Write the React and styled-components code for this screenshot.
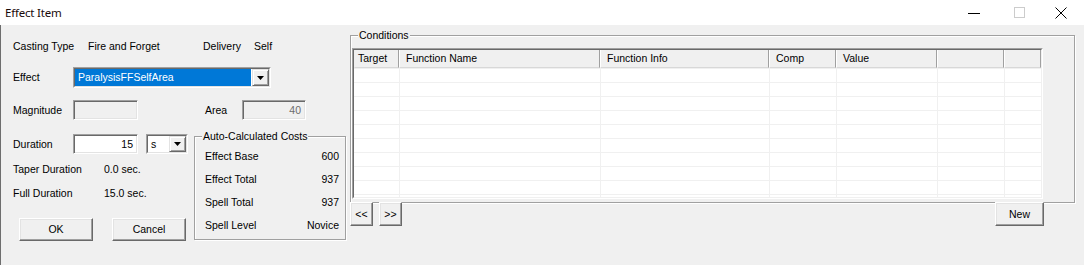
import React from "react";
import styled, { createGlobalStyle } from "styled-components";

const Global = createGlobalStyle`
  html, body, #root { margin: 0; padding: 0; height: 100%; overflow: hidden; }
  body {
    background: #f0f0f0;
    font-family: "Liberation Sans", Arial, sans-serif;
    font-size: 10.5px;
    color: #000;
  }
  * { box-sizing: border-box; }
`;

const Win = styled.div`
  width: 1084px;
  height: 265px;
  display: flex;
  flex-direction: column;
  background: #f0f0f0;
`;

const TitleBar = styled.div`
  height: 25px;
  flex-shrink: 0;
  background: #fff;
  display: flex;
  align-items: center;
`;

const Title = styled.div`
  padding-left: 5px;
  font-family: "Noto Sans", "Open Sans", sans-serif;
  font-size: 11.5px;
  letter-spacing: -0.2px;
  color: #1a0a0a;
  flex: 1;
`;

const CtrlBtn = styled.div`
  width: ${(p) => p.$w}px;
  height: 25px;
  display: flex;
  align-items: center;
  justify-content: center;
`;

const Body = styled.div`
  flex: 1;
  display: flex;
  border-left: 1px solid #6e6e6e;
  min-height: 0;
`;

const LeftPanel = styled.div`
  width: 349px;
  flex-shrink: 0;
  padding-left: 12px;
  display: flex;
  flex-direction: column;
`;

const Row = styled.div`
  display: flex;
  align-items: center;
  height: ${(p) => p.$h}px;
  margin-top: ${(p) => p.$mt || 0}px;
`;

const Label = styled.span`
  width: ${(p) => (p.$w ? `${p.$w}px` : "auto")};
  margin-left: ${(p) => p.$ml || 0}px;
  flex-shrink: 0;
  white-space: nowrap;
  line-height: 13px;
`;

const TextBox = styled.div`
  width: ${(p) => p.$w}px;
  height: ${(p) => p.$h || 20}px;
  margin-left: ${(p) => p.$ml || 0}px;
  flex-shrink: 0;
  border: 1px solid;
  border-color: #a0a0a0 #fff #fff #a0a0a0;
  box-shadow: inset 1px 1px 0 #696969, inset -1px -1px 0 #e3e3e3;
  background: ${(p) => (p.$disabled ? "#f0f0f0" : "#fff")};
  color: ${(p) => (p.$disabled ? "#6d6d6d" : "#000")};
  display: flex;
  align-items: center;
  justify-content: flex-end;
  padding-right: 4px;
  line-height: 13px;
`;

const Combo = styled.div`
  width: ${(p) => p.$w}px;
  height: ${(p) => p.$h}px;
  margin-left: ${(p) => p.$ml || 0}px;
  flex-shrink: 0;
  border: 1px solid;
  border-color: #a0a0a0 #fff #fff #a0a0a0;
  background: #fff;
  display: flex;
`;

const ComboInner = styled.div`
  flex: 1;
  display: flex;
  border: 1px solid;
  border-color: #696969 #e3e3e3 #e3e3e3 #696969;
  background: #fff;
`;

const ComboText = styled.div`
  flex: 1;
  margin-right: 1px;
  background: ${(p) => (p.$selected ? "#0078d7" : "#fff")};
  color: ${(p) => (p.$selected ? "#fff" : "#000")};
  display: flex;
  align-items: center;
  padding-left: 3px;
  line-height: 13px;
  white-space: nowrap;
  overflow: hidden;
`;

const DropBtn = styled.div`
  width: 17px;
  flex-shrink: 0;
  background: #f0f0f0;
  border: 1px solid;
  border-color: #e3e3e3 #696969 #696969 #e3e3e3;
  box-shadow: inset 1px 1px 0 #fff, inset -1px -1px 0 #a0a0a0;
  display: flex;
  align-items: center;
  justify-content: center;
`;

const Lower = styled.div`
  display: flex;
`;

const LeftCol = styled.div`
  width: 181px;
  flex-shrink: 0;
  display: flex;
  flex-direction: column;
`;

const Button = styled.div`
  width: ${(p) => p.$w}px;
  height: ${(p) => p.$h || 23}px;
  margin-left: ${(p) => p.$ml || 0}px;
  flex-shrink: 0;
  background: #f0f0f0;
  border: 1px solid;
  border-color: #fff #696969 #696969 #fff;
  box-shadow: inset -1px -1px 0 #a0a0a0, inset 1px 1px 0 #e3e3e3;
  display: flex;
  align-items: center;
  justify-content: center;
  line-height: 13px;
  white-space: nowrap;
`;

const GroupBox = styled.fieldset`
  margin: ${(p) => p.$mt || 0}px 0 0 0;
  width: ${(p) => p.$w}px;
  height: ${(p) => p.$h}px;
  min-width: 0;
  flex-shrink: 0;
  padding: ${(p) => p.$pad};
  border: 1px solid #a0a0a0;
  box-shadow: inset 1px 1px 0 #fff, 1px 1px 0 #fff;
  display: flex;
  flex-direction: column;
`;

const Legend = styled.legend`
  padding: 0 1px;
  margin-left: ${(p) => p.$ml}px;
  line-height: 13px;
  background: #f0f0f0;
  white-space: nowrap;
`;

const CostRow = styled.div`
  height: 23px;
  padding-left: 3px;
  display: flex;
  align-items: center;
  justify-content: space-between;
  line-height: 13px;
`;

const RightPanel = styled.div`
  display: flex;
  flex-direction: column;
  padding-top: 4px;
`;

const ListOuter = styled.div`
  margin-top: 6px;
  width: 691px;
  height: 151px;
  border: 1px solid;
  border-color: #a0a0a0 #fff #fff #a0a0a0;
  display: flex;
`;

const ListInner = styled.div`
  flex: 1;
  border: 1px solid;
  border-color: #696969 #f0f0f0 #f0f0f0 #696969;
  background: #fff;
  overflow: hidden;
  display: flex;
  flex-direction: column;
`;

const HeaderRow = styled.div`
  display: flex;
  height: 18px;
  flex-shrink: 0;
  background: #f0f0f0;
`;

const HeaderCell = styled.div`
  width: ${(p) => p.$w}px;
  flex-shrink: 0;
  border-left: 1px solid ${(p) => (p.$first ? "#f0f0f0" : "#fff")};
  border-right: 1px solid #a0a0a0;
  border-bottom: 1px solid #d8d8d8;
  padding-left: ${(p) => (p.$first ? 3 : 6)}px;
  display: flex;
  align-items: center;
  line-height: 13px;
  white-space: nowrap;
`;

const GridRow = styled.div`
  display: flex;
  height: 14px;
  flex-shrink: 0;
  border-top: 1px solid #f0f0f0;
`;

const GridCell = styled.div`
  width: ${(p) => p.$w}px;
  flex-shrink: 0;
  border-left: 1px solid ${(p) => (p.$first ? "transparent" : "#f0f0f0")};
`;

const Footer = styled.div`
  display: flex;
  width: 694px;
  margin-top: -1px;
`;

const Spacer = styled.div`
  flex: 1;
`;

const Arrow = () => (
  <svg width="7" height="4" viewBox="0 0 7 4">
    <polygon points="0,0 7,0 3.5,4" fill="#000" />
  </svg>
);

const columns = [
  { name: "Target", w: 45 },
  { name: "Function Name", w: 201 },
  { name: "Function Info", w: 169 },
  { name: "Comp", w: 67 },
  { name: "Value", w: 101 },
  { name: "", w: 67 },
  { name: "", w: 37 },
];

const costs = [
  ["Effect Base", "600"],
  ["Effect Total", "937"],
  ["Spell Total", "937"],
  ["Spell Level", "Novice"],
];

export default function App() {
  return (
    <>
      <Global />
      <Win>
        <TitleBar>
          <Title>Effect Item</Title>
          <CtrlBtn $w={52}>
            <svg width="12" height="10" viewBox="0 0 12 10">
              <line x1="0" y1="5.5" x2="12" y2="5.5" stroke="#000" strokeWidth="1" />
            </svg>
          </CtrlBtn>
          <CtrlBtn $w={38}>
            <svg width="11" height="11" viewBox="0 0 11 11">
              <rect x="0.5" y="0.5" width="10" height="10" fill="none" stroke="#cccccc" strokeWidth="1" />
            </svg>
          </CtrlBtn>
          <CtrlBtn $w={46}>
            <svg width="12" height="12" viewBox="0 0 12 12">
              <path d="M0.5 0.5 L11.5 11.5 M11.5 0.5 L0.5 11.5" stroke="#000" strokeWidth="1" />
            </svg>
          </CtrlBtn>
        </TitleBar>
        <Body>
          <LeftPanel>
            <Row $h={20} $mt={11}>
              <Label $w={75}>Casting Type</Label>
              <Label $w={115}>Fire and Forget</Label>
              <Label $w={51}>Delivery</Label>
              <Label>Self</Label>
            </Row>
            <Row $h={21} $mt={11}>
              <Label $w={60}>Effect</Label>
              <Combo $w={198} $h={21}>
                <ComboInner>
                  <ComboText $selected>ParalysisFFSelfArea</ComboText>
                  <DropBtn>
                    <Arrow />
                  </DropBtn>
                </ComboInner>
              </Combo>
            </Row>
            <Row $h={20} $mt={12}>
              <Label $w={60}>Magnitude</Label>
              <TextBox $w={65} $disabled />
              <Label $w={37} $ml={67}>Area</Label>
              <TextBox $w={64} $disabled>40</TextBox>
            </Row>
            <Lower>
              <LeftCol>
                <Row $h={20} $mt={14}>
                  <Label $w={60}>Duration</Label>
                  <TextBox $w={65}>15</TextBox>
                  <Combo $w={42} $h={20} $ml={8}>
                    <ComboInner>
                      <ComboText>s</ComboText>
                      <DropBtn>
                        <Arrow />
                      </DropBtn>
                    </ComboInner>
                  </Combo>
                </Row>
                <Row $h={24} $mt={3}>
                  <Label $w={91}>Taper Duration</Label>
                  <Label>0.0 sec.</Label>
                </Row>
                <Row $h={24}>
                  <Label $w={91}>Full Duration</Label>
                  <Label>15.0 sec.</Label>
                </Row>
                <Row $h={23} $mt={13}>
                  <Button $w={74} $ml={6}>OK</Button>
                  <Button $w={74} $ml={19}>Cancel</Button>
                </Row>
              </LeftCol>
              <GroupBox $mt={10} $w={152} $h={110} $pad="2px 6px 0 7px">
                <Legend $ml={0}>Auto-Calculated Costs</Legend>
                {costs.map(([k, v]) => (
                  <CostRow key={k}>
                    <span>{k}</span>
                    <span>{v}</span>
                  </CostRow>
                ))}
              </GroupBox>
            </Lower>
          </LeftPanel>
          <RightPanel>
            <GroupBox $w={725} $h={174} $pad="0 0 0 1px">
              <Legend $ml={6}>Conditions</Legend>
              <ListOuter>
                <ListInner>
                  <HeaderRow>
                    {columns.map((c, i) => (
                      <HeaderCell key={i} $w={c.w} $first={i === 0}>
                        {c.name}
                      </HeaderCell>
                    ))}
                  </HeaderRow>
                  {Array.from({ length: 10 }).map((_, r) => (
                    <GridRow key={r}>
                      {columns.map((c, i) => (
                        <GridCell key={i} $w={c.w} $first={i === 0} />
                      ))}
                    </GridRow>
                  ))}
                </ListInner>
              </ListOuter>
            </GroupBox>
            <Footer>
              <Button $w={23} $h={24}>&lt;&lt;</Button>
              <Button $w={23} $h={24} $ml={6}>&gt;&gt;</Button>
              <Spacer />
              <Button $w={49} $h={24}>New</Button>
            </Footer>
          </RightPanel>
        </Body>
      </Win>
    </>
  );
}
